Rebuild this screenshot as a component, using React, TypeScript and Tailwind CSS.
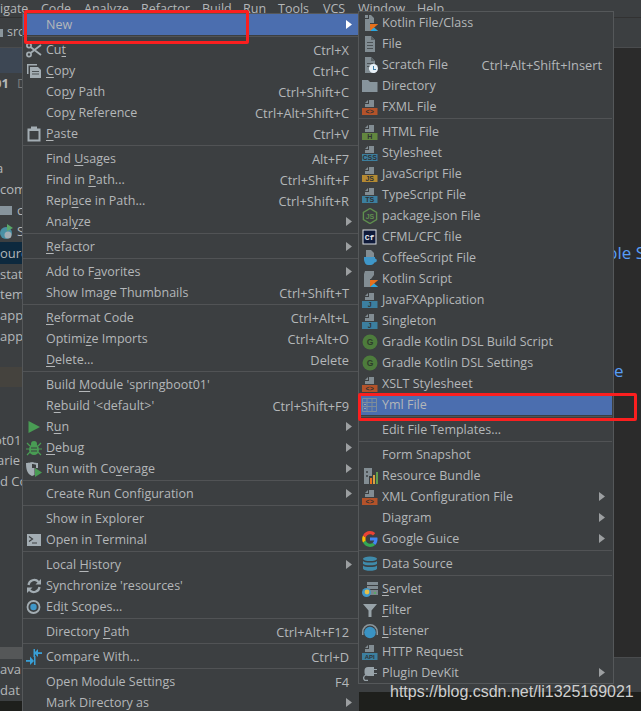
import React from "react";

type Item = {
  l: string;
  m?: number;
  s?: string;
  i?: React.ReactNode;
  a?: boolean;
  hl?: boolean;
};
type Entry = Item | "sep";

const Svg = ({ children }: { children: React.ReactNode }) => (
  <svg width="16" height="16" viewBox="0 0 16 16" className="block">
    {children}
  </svg>
);

const GREY = "#828d93";

const Doc = () => (
  <>
    <path d="M3 0h6l4 4v12H3z" fill={GREY} />
    <path d="M9 0l4 4H9z" fill="#5a6266" />
  </>
);

const Badged = ({ color, label, size = 7 }: { color: string; label: string; size?: number }) => (
  <Svg>
    <path d="M7 1h5v7H3V5h4z" fill={GREY} />
    <path d="M3 4l3-3v3z" fill={GREY} />
    <rect x="0" y="9" width="15.5" height="7" fill={color} />
    <text x="7.7" y="15.2" textAnchor="middle" fontSize={size} fontWeight="700" fontFamily="Liberation Sans, sans-serif" fill="#2f3234">
      {label}
    </text>
  </Svg>
);

const KotlinMark = () => (
  <>
    <path d="M8 9h8l-4 3.5-4-0z" fill="#e8711c" />
    <path d="M8 12.5L12 9l4 0-4 3.5 4 3.5H8z" fill="#e8711c" />
    <path d="M8 16l4-3.5 4 3.5z" fill="#29a7e1" />
  </>
);

const KotlinFile = () => (
  <Svg>
    <path d="M3 0h3v3H3zM7 0h2l3 3v5H8v8H3V4h4z" fill={GREY} />
    <KotlinMark />
  </Svg>
);

const FileIcon = () => (
  <Svg>
    <Doc />
    <path d="M5 6h6v1H5zM5 9h6v1H5zM5 12h6v1H5z" fill="#4c5255" />
  </Svg>
);

const Scratch = () => (
  <Svg>
    <Doc />
    <path d="M5 6h6v1H5zM5 9h4v1H5z" fill="#4c5255" />
    <circle cx="11.5" cy="11.5" r="4.5" fill="#e8f1f7" />
    <path d="M11 9h1v3h2v1h-3z" fill="#3d7fa8" />
  </Svg>
);

const Folder = () => (
  <Svg>
    <path d="M0 2h6l2 2h7.5v10H0z" fill="#87949c" />
  </Svg>
);

const Npm = () => (
  <Svg>
    <path d="M8 .5l6.6 3.8v7.4L8 15.5l-6.6-3.8V4.3z" fill="none" stroke="#5f8f4e" strokeWidth="1.4" />
    <text x="8" y="11" textAnchor="middle" fontSize="7" fontWeight="700" fontFamily="Liberation Sans, sans-serif" fill="#5f8f4e">
      JS
    </text>
  </Svg>
);

const Cfml = () => (
  <Svg>
    <rect x="1" y="1" width="13" height="14" fill="#0f1a3a" stroke="#d9dde2" strokeWidth="1" />
    <text x="7.5" y="11" textAnchor="middle" fontSize="8" fontWeight="700" fontFamily="Liberation Mono, monospace" fill="#e8edf2">
      Cf
    </text>
  </Svg>
);

const Coffee = () => (
  <Svg>
    <path d="M4 0h5l3 3v4H4z" fill={GREY} />
    <path d="M2 7h11v1.500c2.500 0 2.500 4-.5 4-.8 1.500-2 2.500-3.500 2.500H6C4 15 2.500 13 2 10z" fill="#3f97c9" />
  </Svg>
);

const KotlinScript = () => (
  <Svg>
    <path d="M3 0h9v4l-3 4H8v8H2V3z" fill={GREY} />
    <KotlinMark />
  </Svg>
);

const Gradle = () => (
  <Svg>
    <circle cx="8" cy="8" r="7.500" fill="#4d7c3c" />
    <text x="8" y="11" textAnchor="middle" fontSize="8.500" fontWeight="700" fontFamily="Liberation Sans, sans-serif" fill="#2e3b2c">
      G
    </text>
  </Svg>
);

const Grid = () => (
  <Svg>
    <path d="M.5 1.500h14v13H.5z" fill="none" stroke="#7e8c99" />
    <path d="M5 1.500v13M10 1.500v13M.5 5.500h14M.5 9.500h14" stroke="#7e8c99" />
    <path d="M2 7h2v1H2zM2 11h2v1H2z" fill="#8fa5bb" />
  </Svg>
);

const Bundle = () => (
  <Svg>
    <path d="M2 0h8v8H7v8H2z" fill={GREY} />
    <path d="M4 3h2v2H4zM4 7h2v2H4z" fill="#4c5255" />
    <rect x="8" y="10" width="2" height="6" fill="#e8711c" />
    <rect x="11" y="7" width="2" height="9" fill="#d9a343" />
    <rect x="14" y="4" width="2" height="12" fill="#5f9e4b" />
  </Svg>
);

const Google = () => (
  <Svg>
    <path d="M15.500 8.200c0-.6 0-1.100-.2-1.600H8v3h4.200c-.2 1-.8 1.800-1.600 2.400l2.500 2c1.500-1.400 2.400-3.400 2.400-5.800z" fill="#4285f4" />
    <path d="M8 16c2.100 0 3.900-.7 5.100-2l-2.500-2c-.7.500-1.500.8-2.600.8-2 0-3.700-1.300-4.300-3.200L1 11.600C2.300 14.200 5 16 8 16z" fill="#34a853" />
    <path d="M3.700 9.600c-.3-1-.3-2.200 0-3.200L1 4.400C-.1 6.500-.1 9.500 1 11.600z" fill="#fbbc05" />
    <path d="M8 3.200c1.200 0 2.200.4 3 1.200l2.200-2.200C11.900.9 10.100 0 8 0 5 0 2.300 1.800 1 4.400l2.700 2C4.300 4.500 6 3.200 8 3.200z" fill="#ea4335" />
  </Svg>
);

const DataSource = () => (
  <Svg>
    <ellipse cx="8" cy="2.800" rx="7" ry="2.300" fill="#3f8bab" />
    <path d="M1 5c1.500 2 12.500 2 14 0v2.800c-1.500 2-12.500 2-14 0z" fill="#3f8bab" />
    <path d="M1 9.500c1.500 2 12.500 2 14 0v3.200c-1.500 2.800-12.500 2.800-14 0z" fill="#3f8bab" />
  </Svg>
);

const Servlet = () => (
  <Svg>
    <path d="M5 1h11v3H5zM5 5h11v3H5z" fill={GREY} />
    <path d="M7 9h9v5H7z" fill="#7a868c" />
    <rect x="12" y="11" width="2" height="2" fill="#59a869" />
    <circle cx="4.500" cy="11.500" r="4.500" fill="#3f97c9" />
    <circle cx="5" cy="11" r="2.400" fill="#e6c04a" />
  </Svg>
);

const Filter = () => (
  <Svg>
    <path d="M1 2h14L9.500 8.500V15h-3V8.500z" fill="#98a3a9" />
  </Svg>
);

const Listener = () => (
  <Svg>
    <path d="M0 9a8 8 0 0 1 16 0v3h-1.500V9a6.500 6.500 0 0 0-13 0v3H0z" fill="#8b969c" />
    <circle cx="8" cy="9.500" r="5.800" fill="#3a93c4" />
  </Svg>
);

const Plugin = () => (
  <Svg>
    <path d="M6 2h6v9H6a3.500 3.500 0 0 1-3.500-3.500v-2A3.500 3.500 0 0 1 6 2z" fill="#98a3a9" />
    <path d="M12 4h3v1h-3zM12 8h3v1h-3z" fill="#98a3a9" />
    <path d="M4 10c-3 1-3 4-1 5.500h3" fill="none" stroke="#98a3a9" strokeWidth="1.300" />
  </Svg>
);

const Scissors = () => (
  <Svg>
    <circle cx="3" cy="3.500" r="2.100" fill="none" stroke="#a3adb3" strokeWidth="1.700" />
    <circle cx="3" cy="12.500" r="2.100" fill="none" stroke="#a3adb3" strokeWidth="1.700" />
    <path d="M4.500 5l10.500 8M4.500 11L15 3" stroke="#a3adb3" strokeWidth="1.800" />
  </Svg>
);

const Copy = () => (
  <Svg>
    <path d="M1 1h10v1.500H2.500V11H1z" fill="#a3adb3" />
    <path d="M4 4h8l3 3v8H4z" fill="#a3adb3" />
    <path d="M6 8h7v1H6zM6 10.500h7v1H6z" fill="#4c5255" />
  </Svg>
);

const Paste = () => (
  <Svg>
    <path d="M1.500 2.500h13v13h-13z" fill="#a3adb3" />
    <path d="M3.500 5h9v8.500h-9z" fill="#3c3f41" />
    <path d="M5 .5h6v4H5z" fill="#a3adb3" />
  </Svg>
);

const Play = () => (
  <Svg>
    <path d="M2.500 2L14 8 2.500 14z" fill="#499c54" />
  </Svg>
);

const Bug = () => (
  <Svg>
    <ellipse cx="8" cy="9.500" rx="5" ry="5.500" fill="#499c54" />
    <circle cx="8" cy="4" r="3" fill="#499c54" />
    <path d="M1 3l3 3M15 3l-3 3M0 9h3M13 9h3M1 15l3-3M15 15l-3-3" stroke="#499c54" strokeWidth="1.200" />
    <path d="M5 7.500h6v1H5zM5 10.500h6v1H5z" fill="#3c3f41" />
  </Svg>
);

const Coverage = () => (
  <Svg>
    <path d="M0 2c3 0 6-1 6-1s3 1 6 1v5H8.500v7L6 15C1 13 0 8 0 2z" fill="#a3adb3" />
    <path d="M6 3c1 0 3 .5 4 .7V7H6z" fill="#3c3f41" />
    <path d="M9 7l7 4.500L9 16z" fill="#499c54" />
  </Svg>
);

const Terminal = () => (
  <Svg>
    <rect x="1" y="2" width="14" height="12" fill="#a3adb3" />
    <path d="M3 4.500L6.500 7 3 9.500" fill="none" stroke="#3c3f41" strokeWidth="1.200" />
    <path d="M6 10.500h5v1H6z" fill="#3c3f41" />
  </Svg>
);

const Sync = () => (
  <Svg>
    <path d="M2.500 7a5.700 5.700 0 0 1 10-3" fill="none" stroke="#a3adb3" strokeWidth="2.200" />
    <path d="M15 1v5.500H9.500z" fill="#a3adb3" />
    <path d="M13.500 9a5.700 5.700 0 0 1-10 3" fill="none" stroke="#a3adb3" strokeWidth="2.200" />
    <path d="M1 15V9.500h5.500z" fill="#a3adb3" />
  </Svg>
);

const Scopes = () => (
  <Svg>
    <circle cx="7.500" cy="8" r="6" fill="none" stroke="#a3adb3" strokeWidth="1.800" />
    <circle cx="7.500" cy="8" r="3.200" fill="#3f97c9" />
  </Svg>
);

const Compare = () => (
  <Svg>
    <path d="M0 11h5v1.800H0z" fill="#389fd6" />
    <path d="M4 7.500l4 4.400-4 4.100z" fill="#389fd6" />
    <path d="M8 7h1.500v9H8z" fill="#389fd6" />
    <path d="M10.500 3.200H16V5h-5.500z" fill="#389fd6" />
    <path d="M12 0L8 4l4 4z" fill="#389fd6" />
    <path d="M7.500 0H9v8H7.500z" fill="#389fd6" />
  </Svg>
);

const Arrow = ({ white }: { white?: boolean }) => (
  <svg width="6" height="9" viewBox="0 0 6 9" className={white ? "block -mr-[3px] text-white" : "block -mr-[3px] text-[#9c9fa1]"}>
    <path d="M0 0l6 4.500L0 9z" fill="currentColor" />
  </svg>
);

const Label = ({ text, m }: { text: string; m?: number }) =>
  m === undefined ? (
    <span className="mt-[2px]">{text}</span>
  ) : (
    <span className="mt-[2px]">
      {text.slice(0, m)}
      <u className="underline-offset-2">{text[m]}</u>
      {text.slice(m + 1)}
    </span>
  );

const Menu = ({ items, className }: { items: Entry[]; className: string }) => (
  <div className={className}>
    {items.map((it, idx) =>
      it === "sep" ? (
        <div key={idx} className="h-[4px] pt-[1px]">
          <div className="h-[1px] bg-[#515355]" />
        </div>
      ) : (
        <div
          key={idx}
          className={
            it.hl
              ? "flex h-[21px] items-center whitespace-nowrap bg-[#4b6eaf] pl-[3px] pr-[10px]"
              : "flex h-[21px] items-center whitespace-nowrap pl-[3px] pr-[10px]"
          }
        >
          <div className="w-[20px] shrink-0">{it.i}</div>
          <Label text={it.l} m={it.m} />
          {it.s && <span className="ml-auto mt-[2px] text-[12.8px]">{it.s}</span>}
          {it.a && (
            <span className="ml-auto">
              <Arrow white={it.hl} />
            </span>
          )}
        </div>
      ),
    )}
  </div>
);

const leftItems: Entry[] = [
  { l: "New", a: true, hl: true },
  "sep",
  { l: "Cut", m: 2, s: "Ctrl+X", i: <Scissors /> },
  { l: "Copy", m: 0, s: "Ctrl+C", i: <Copy /> },
  { l: "Copy Path", m: 2, s: "Ctrl+Shift+C" },
  { l: "Copy Reference", m: 3, s: "Ctrl+Alt+Shift+C" },
  { l: "Paste", m: 0, s: "Ctrl+V", i: <Paste /> },
  "sep",
  { l: "Find Usages", m: 5, s: "Alt+F7" },
  { l: "Find in Path...", m: 8, s: "Ctrl+Shift+F" },
  { l: "Replace in Path...", m: 4, s: "Ctrl+Shift+R" },
  { l: "Analyze", m: 4, a: true },
  "sep",
  { l: "Refactor", m: 0, a: true },
  "sep",
  { l: "Add to Favorites", m: 8, a: true },
  { l: "Show Image Thumbnails", s: "Ctrl+Shift+T" },
  "sep",
  { l: "Reformat Code", m: 0, s: "Ctrl+Alt+L" },
  { l: "Optimize Imports", m: 6, s: "Ctrl+Alt+O" },
  { l: "Delete...", m: 0, s: "Delete" },
  "sep",
  { l: "Build Module 'springboot01'", m: 6 },
  { l: "Rebuild '<default>'", m: 1, s: "Ctrl+Shift+F9" },
  { l: "Run", m: 1, a: true, i: <Play /> },
  { l: "Debug", m: 0, a: true, i: <Bug /> },
  { l: "Run with Coverage", m: 11, a: true, i: <Coverage /> },
  "sep",
  { l: "Create Run Configuration", a: true },
  "sep",
  { l: "Show in Explorer" },
  { l: "Open in Terminal", i: <Terminal /> },
  "sep",
  { l: "Local History", m: 6, a: true },
  { l: "Synchronize 'resources'", i: <Sync /> },
  { l: "Edit Scopes...", m: 2, i: <Scopes /> },
  "sep",
  { l: "Directory Path", m: 10, s: "Ctrl+Alt+F12" },
  "sep",
  { l: "Compare With...", s: "Ctrl+D", i: <Compare /> },
  "sep",
  { l: "Open Module Settings", s: "F4" },
  { l: "Mark Directory as", a: true },
];

const ORANGE = "#b4532a";
const BLUE = "#3c7f9f";

const rightItems: Entry[] = [
  { l: "Kotlin File/Class", i: <KotlinFile /> },
  { l: "File", i: <FileIcon /> },
  { l: "Scratch File", s: "Ctrl+Alt+Shift+Insert", i: <Scratch /> },
  { l: "Directory", i: <Folder /> },
  { l: "FXML File", i: <Badged color={ORANGE} label="<>" /> },
  "sep",
  { l: "HTML File", i: <Badged color="#62873f" label="H" /> },
  { l: "Stylesheet", i: <Badged color={BLUE} label="CSS" /> },
  { l: "JavaScript File", i: <Badged color="#b58a32" label="JS" /> },
  { l: "TypeScript File", i: <Badged color={BLUE} label="TS" /> },
  { l: "package.json File", i: <Npm /> },
  { l: "CFML/CFC file", i: <Cfml /> },
  { l: "CoffeeScript File", i: <Coffee /> },
  { l: "Kotlin Script", i: <KotlinScript /> },
  { l: "JavaFXApplication", i: <Badged color={BLUE} label="J" /> },
  { l: "Singleton", i: <Badged color={BLUE} label="J" /> },
  { l: "Gradle Kotlin DSL Build Script", i: <Gradle /> },
  { l: "Gradle Kotlin DSL Settings", i: <Gradle /> },
  { l: "XSLT Stylesheet", i: <Badged color={ORANGE} label="<>" /> },
  { l: "Yml File", hl: true, i: <Grid /> },
  "sep",
  { l: "Edit File Templates..." },
  "sep",
  { l: "Form Snapshot" },
  { l: "Resource Bundle", i: <Bundle /> },
  { l: "XML Configuration File", a: true, i: <Badged color={ORANGE} label="<>" /> },
  { l: "Diagram", a: true },
  { l: "Google Guice", a: true, i: <Google /> },
  "sep",
  { l: "Data Source", i: <DataSource /> },
  "sep",
  { l: "Servlet", m: 0, i: <Servlet /> },
  { l: "Filter", m: 0, i: <Filter /> },
  { l: "Listener", m: 0, i: <Listener /> },
  { l: "HTTP Request", i: <Badged color={BLUE} label="API" size={6} /> },
  { l: "Plugin DevKit", a: true, i: <Plugin /> },
];

const menuBar = [
  { t: "igate", w: "w-[41px]" },
  { t: "Code", w: "w-[43px]" },
  { t: "Analyze", w: "w-[57px]" },
  { t: "Refactor", w: "w-[61px]" },
  { t: "Build", w: "w-[41px]" },
  { t: "Run", w: "w-[35px]" },
  { t: "Tools", w: "w-[45px]" },
  { t: "VCS", w: "w-[35px]" },
  { t: "Window", w: "w-[59px]" },
  { t: "Help", w: "w-[40px]" },
];

export default function App() {
  return (
    <div className="relative flex h-[711px] w-[641px] flex-col overflow-hidden bg-[#3c3f41] font-['Open_Sans',sans-serif] text-[12.5px] leading-none text-[#b4b7b9]">
      {/* menu bar */}
      <div className="flex h-[18px] shrink-0 items-start overflow-hidden border-b border-[#323232] pt-[2px] leading-[13px]">
        {menuBar.map((b) => (
          <span key={b.t} className={b.w}>
            {b.t}
          </span>
        ))}
      </div>

      {/* toolbar */}
      <div className="flex h-[30px] shrink-0 items-center gap-[4px] border-b border-[#4a4c4e]">
        <div className="h-[8px] w-[3px] bg-[#8b969c]" />
        <span>src</span>
      </div>

      <div className="flex min-h-0 flex-1">
        {/* project tree, mostly hidden by the menu */}
        <div className="flex w-[22px] shrink-0 flex-col overflow-hidden whitespace-nowrap text-[13px]">
          <div className="h-[25px] shrink-0 bg-[#3d4754]" />
          <div className="-ml-[6px] flex h-[21px] shrink-0 items-center font-bold">
            01<span className="ml-[8px] font-normal text-[#777a7c]">D</span>
          </div>
          <div className="h-[64px] shrink-0" />
          <div className="-ml-[4px] flex h-[21px] shrink-0 items-center">a</div>
          <div className="flex h-[21px] shrink-0 items-center">com</div>
          <div className="flex h-[21px] shrink-0 items-center">
            <div className="h-[9px] w-[12px] shrink-0 bg-[#87949c]" />
            <span className="ml-[5px]">c</span>
          </div>
          <div className="flex h-[21px] shrink-0 items-center">
            <svg width="13" height="16" viewBox="0 0 13 16" className="shrink-0">
              <circle cx="6" cy="9" r="6" fill="#4a90a4" />
              <path d="M7 0l6 4-6 3z" fill="#59a869" />
              <circle cx="8" cy="11" r="3.500" fill="#a3adb3" />
            </svg>
            <span className="ml-[4px]">S</span>
          </div>
          <div className="flex h-[22px] shrink-0 items-center bg-[#0d293e]">ourc</div>
          <div className="flex h-[20px] shrink-0 items-center">stati</div>
          <div className="flex h-[21px] shrink-0 items-center">tem</div>
          <div className="flex h-[21px] shrink-0 items-center">app</div>
          <div className="flex h-[21px] shrink-0 items-center">app</div>
          <div className="h-[20px] shrink-0" />
          <div className="h-[20px] shrink-0 bg-[#45433e]" />
          <div className="h-[43px] shrink-0" />
          <div className="-ml-[6px] flex h-[20px] shrink-0 items-center">ot01</div>
          <div className="-ml-[3px] flex h-[21px] shrink-0 items-center">arie</div>
          <div className="flex h-[21px] shrink-0 items-center">d Co</div>
          <div className="h-[155px] shrink-0" />
          <div className="h-[12px] shrink-0 bg-[#555758]" />
          <div className="flex h-[21px] shrink-0 items-center">ava</div>
          <div className="flex h-[21px] shrink-0 items-center">dat</div>
          <div className="flex-1 bg-[#1e1f1c]" />
        </div>

        {/* editor */}
        <div className="flex min-w-0 flex-1 flex-col">
          <div className="flex h-[609px] flex-col overflow-hidden whitespace-nowrap bg-[#2b2b2b] text-[17px] text-[#589df6]">
            <div className="ml-[585px] mt-[196px]">ple S</div>
            <div className="ml-[592px] mt-[101px]">e</div>
          </div>
          <div className="flex-1 border-t border-[#4a4c4e]" />
          <div className="h-[19px] bg-[#1e1f1c]" />
        </div>
      </div>

      {/* context menu */}
      <Menu
        items={leftItems}
        className="absolute left-[22px] top-[13px] w-[337px] border-l border-t border-[#55585a] bg-[#3c3f41]"
      />
      {/* New submenu */}
      <Menu
        items={rightItems}
        className="absolute left-[358px] top-[11px] w-[256px] border border-[#55585a] bg-[#3c3f41] pr-[1px]"
      />

      {/* red markers from the screenshot's author */}
      <div className="absolute left-[24px] top-[10px] h-[34px] w-[225px] rounded-[2px] border-[3px] border-[#fb1f1f]" />
      <div className="absolute left-[358px] top-[393px] h-[28px] w-[279px] rounded-[2px] border-[3px] border-[#fb1f1f]" />

      {/* watermark */}
      <div className="absolute left-[390px] top-[683px] font-['Liberation_Sans',sans-serif] text-[16px] leading-[18px] text-[#cfcfcf]">
        https://blog.csdn.net/li1325169021
      </div>
    </div>
  );
}
